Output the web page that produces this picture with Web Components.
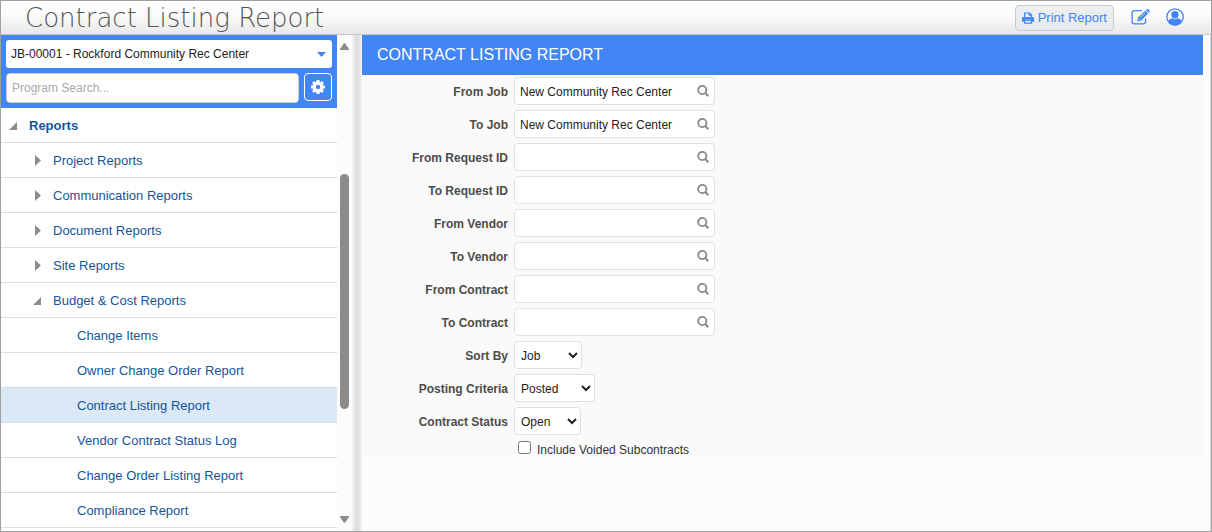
<!DOCTYPE html>
<html lang="en">
<head>
<meta charset="utf-8">
<title>Contract Listing Report</title>
<style>
  html, body { height: 100%; margin: 0; }
  body { font: 12px/16px "Liberation Sans", Arial, sans-serif; color: #333; overflow: hidden; }
</style>
</head>
<body>
<report-app></report-app>

<template id="t-app">
  <style>
    :host { display: flex; flex-direction: column; height: 100vh; box-sizing: border-box;
      border: 1px solid #a0a0a0; background: #fcfcfc;
      --blue: #4285f4; --link: #15559a; --line: #d5dde5; }
    .body { display: flex; flex: 1; min-height: 0; }
    main { flex: 1; min-width: 0; padding-right: 7px; border-right: 1px solid #d5dde5; }
    .splitter { width: 10px; background: linear-gradient(90deg, #f4f4f4, #dedede 40%, #dedede 60%, #f4f4f4); }
  </style>
  <app-header heading="Contract Listing Report"></app-header>
  <div class="body">
    <program-sidebar></program-sidebar>
    <scroll-rail></scroll-rail>
    <div class="splitter"></div>
    <main>
      <report-panel heading="CONTRACT LISTING REPORT">
        <lookup-field label="From Job" value="New Community Rec Center"></lookup-field>
        <lookup-field label="To Job" value="New Community Rec Center"></lookup-field>
        <lookup-field label="From Request ID"></lookup-field>
        <lookup-field label="To Request ID"></lookup-field>
        <lookup-field label="From Vendor"></lookup-field>
        <lookup-field label="To Vendor"></lookup-field>
        <lookup-field label="From Contract"></lookup-field>
        <lookup-field label="To Contract"></lookup-field>
        <select-field label="Sort By" value="Job"></select-field>
        <select-field label="Posting Criteria" value="Posted"></select-field>
        <select-field label="Contract Status" value="Open"></select-field>
        <check-field>Include Voided Subcontracts</check-field>
      </report-panel>
    </main>
  </div>
</template>

<template id="t-header">
  <style>
    :host { display: flex; align-items: center; height: 33px; padding: 0 27px 0 24px;
      border-bottom: 1px solid #c8c8c8; background: linear-gradient(#fff, #fcfcfc 40%, #e8e8e8); }
    h1 { flex: 1; margin: 0; font: 200 26px/32px "DejaVu Sans", sans-serif; color: #555; white-space: nowrap; }
    .print { display: flex; align-items: center; gap: 4px; box-sizing: border-box; height: 26px; padding: 0 6px;
      border: 1px solid #c0ccd6; border-radius: 4px; background: linear-gradient(#eef0f1, #e4e9ec);
      font: 13px/16px "Liberation Sans", Arial, sans-serif; color: var(--blue); }
    .icon { display: flex; padding: 0 0 2px; border: 0; background: none; color: var(--blue); margin-left: 16px; }
    svg { display: block; }
  </style>
  <h1></h1>
  <button class="print" type="button">
    <svg width="12" height="12" viewBox="0 0 12 12" fill="none" stroke="currentColor" stroke-width="1.2"><path d="M2.600 5.500V1h5l1.900 1.900v2.600M7.400 1v2.200h2"/><path d="M2.600 8.200h6.900v2.900H2.600z"/><path d="M1.700 5h8.600q1.700 0 1.700 1.400v3.300H9.600V7.600H2.500v2.100H0V6.400Q0 5 1.700 5z" fill="currentColor" stroke="none"/></svg>
    <span>Print Report</span>
  </button>
  <button class="icon" type="button" aria-label="Edit">
    <svg width="20" height="18" viewBox="0 0 20 18"><path d="M11.500 2.600H4.500Q2.100 2.600 2.100 5v8.500q0 2.400 2.400 2.400h8.700q2.400 0 2.400-2.400v-2.600" fill="none" stroke="currentColor" stroke-width="1.300" stroke-linecap="round"/><path d="M15.300 2.700l2.800 2.800-7 7-4 1 1-4z" fill="currentColor"/><path d="M15.900 2.100l.8-.8q.8-.6 1.500 0l1.200 1.200q.7.700 0 1.500l-.8.800z" fill="currentColor"/><path d="M10.400 9.700l4.800-4.800M9 10.800l1.200 1.200" stroke="#f3f3f3" stroke-width=".8" fill="none"/></svg>
  </button>
  <button class="icon" type="button" aria-label="Account">
    <svg width="18" height="18" viewBox="0 0 18 18"><circle cx="9" cy="9" r="8.200" fill="none" stroke="currentColor" stroke-width="1.300"/><circle cx="9" cy="6.700" r="3.700" fill="currentColor"/><path d="M2 13.200Q3.500 10.500 6 10.200 9 12.400 12 10.200q2.500.3 4 3Q13.200 17.300 9 17.300T2 13.200z" fill="currentColor"/></svg>
  </button>
</template>

<template id="t-sidebar">
  <style>
    :host { display: block; width: 336px; overflow: hidden; background: #fff; }
    .tools { display: grid; grid-template-columns: 1fr 28px; gap: 4px 5px; height: 73px; box-sizing: border-box; padding: 5px; background: var(--blue); }
    .job { grid-column: 1 / -1; display: grid; align-items: center; }
    .job > * { grid-area: 1 / 1; }
    select { appearance: none; height: 28px; width: 100%; padding: 0 5px; border: 0; border-radius: 3px; background: #fff; font: inherit; color: #222; }
    .job svg { justify-self: end; margin-right: 6px; pointer-events: none; }
    input { box-sizing: border-box; width: 100%; height: 30px; padding: 0 5px; border: 1px solid #ccc; border-radius: 4px; background: #fff; font: inherit; }
    input::placeholder { color: #aaa; opacity: 1; }
    button { display: flex; align-items: center; justify-content: center; height: 28px; padding: 0; border: 1px solid #fff; border-radius: 4px; background: var(--blue); color: #fff; }
  </style>
  <div class="tools">
    <div class="job">
      <select aria-label="Job"><option>JB-00001 - Rockford Community Rec Center</option></select>
      <svg width="9" height="5" viewBox="0 0 9 5"><path d="M0 0h9L4.500 5z" fill="#4285f4"/></svg>
    </div>
    <input type="text" placeholder="Program Search..." aria-label="Program Search">
    <button type="button" aria-label="Settings">
      <svg width="14" height="14" viewBox="-7 -7 14 14" fill="#fff"><g id="g"><rect x="-1.600" y="-7" width="3.200" height="14" rx=".6"/><rect x="-7" y="-1.600" width="14" height="3.200" rx=".6"/></g><use href="#g" transform="rotate(45)"/><circle r="5.400"/><circle r="2.200" fill="#4285f4"/></svg>
    </button>
  </div>
  <nav>
    <tree-row level="0" state="open">Reports</tree-row>
    <tree-row level="1" state="closed">Project Reports</tree-row>
    <tree-row level="1" state="closed">Communication Reports</tree-row>
    <tree-row level="1" state="closed">Document Reports</tree-row>
    <tree-row level="1" state="closed">Site Reports</tree-row>
    <tree-row level="1" state="open">Budget &amp; Cost Reports</tree-row>
    <tree-row level="2">Change Items</tree-row>
    <tree-row level="2">Owner Change Order Report</tree-row>
    <tree-row level="2" selected>Contract Listing Report</tree-row>
    <tree-row level="2">Vendor Contract Status Log</tree-row>
    <tree-row level="2">Change Order Listing Report</tree-row>
    <tree-row level="2">Compliance Report</tree-row>
  </nav>
</template>

<template id="t-row">
  <style>
    :host { display: block; border-bottom: 1px solid var(--line); font: 13px/16px "Liberation Sans", Arial, sans-serif; }
    :host([selected]) { background: #dbe8f5; }
    a { display: flex; align-items: center; gap: 12px; box-sizing: border-box; padding: 2px 0 0 8px; height: 34px; color: var(--link); text-decoration: none; white-space: nowrap; }
    :host([level="0"]) a { font-weight: bold; }
    :host([level="1"]) a { padding-left: 32px; }
    :host([level="2"]) a { padding-left: 56px; }
    svg { width: 8px; height: 12px; display: block; fill: #8a8d90; }
    .open, .closed { display: none; }
    :host([state="open"]) .open, :host([state="closed"]) .closed { display: block; }
  </style>
  <a href="#"><svg viewBox="0 0 8 12"><path class="open" d="M8 2v8H0z"/><path class="closed" d="M2 0v11L8 5.500z"/></svg><slot></slot></a>
</template>

<template id="t-rail">
  <style>
    :host { display: flex; flex-direction: column; align-items: center; width: 15px; box-sizing: border-box; padding: 8px 0; background: #fcfcfc; }
    svg { display: block; fill: #8b8b8b; }
    .before { flex: 124; }
    .thumb { flex: 235; width: 9px; border-radius: 5px; background: #8b8b8b; }
    .after { flex: 107; }
  </style>
  <svg width="9" height="7" viewBox="0 0 9 7"><path d="M3.800.5q.7-.8 1.400 0L9 6v1H0V6z"/></svg>
  <div class="before"></div>
  <div class="thumb"></div>
  <div class="after"></div>
  <svg width="9" height="7" viewBox="0 0 9 7"><path d="M3.800 6.500q.7.800 1.400 0L9 1V0H0v1z"/></svg>
</template>

<template id="t-panel">
  <style>
    :host { display: block; background: #fafafa; }
    h2 { margin: 0; padding-left: 15px; background: var(--blue); color: #fff; font: 16px/40px "Liberation Sans", Arial, sans-serif; }
    form { display: flex; flex-direction: column; gap: 5px; padding-top: 2px; }
  </style>
  <h2></h2>
  <form><slot></slot></form>
</template>

<template id="t-lookup">
  <style>
    :host { display: grid; grid-template-columns: 146px 201px; gap: 6px; align-items: center; }
    label { padding-top: 2px; text-align: right; font-weight: bold; color: #4c4c4c; }
    .box { box-sizing: border-box; display: flex; align-items: center; height: 28px; padding: 0 5px; border: 1px solid #dce1e6; border-radius: 4px; background: #fff; }
    input { flex: 1; min-width: 0; padding: 2px 0 0; border: 0; outline: 0; background: none; font: inherit; color: #222; }
    button { display: flex; padding: 0; border: 0; background: none; }
  </style>
  <label for="f"></label>
  <div class="box">
    <input id="f" type="text">
    <button type="button" aria-label="Look up"><svg width="12" height="12" viewBox="0 0 12 12" fill="none" stroke="#85898d"><circle cx="5.300" cy="5" r="4.100" stroke-width="1.800"/><path d="M8.300 8l3 3.200" stroke-width="2"/></svg></button>
  </div>
</template>

<template id="t-select">
  <style>
    :host { display: grid; grid-template-columns: 146px auto; gap: 6px; align-items: center; justify-content: start; }
    label { padding-top: 2px; text-align: right; font-weight: bold; color: #4c4c4c; }
    select { height: 28px; padding: 1px 0 0 2px; border: 1px solid #dce1e6; border-radius: 4px; background: #fff; font: inherit; color: #222; width: 68px; }
    :host([value="Posted"]) select { width: 81px; }
    :host([value="Open"]) select { width: 67px; }
  </style>
  <label for="s"></label>
  <select id="s"></select>
</template>

<template id="t-check">
  <style>
    :host { display: flex; padding-left: 156px; height: 17px; }
    label { display: flex; gap: 6px; line-height: 20px; color: #333; }
    input { width: 13px; height: 13px; margin: 1px 0 0; }
  </style>
  <label><input type="checkbox"><span><slot></slot></span></label>
</template>

<script>
  class Base extends HTMLElement {
    constructor() {
      super();
      this.attachShadow({ mode: 'open' })
        .append(document.getElementById(this.constructor.template).content.cloneNode(true));
    }
    $(sel) { return this.shadowRoot.querySelector(sel); }
  }
  customElements.define('app-header', class extends Base {
    static template = 't-header';
    connectedCallback() { this.$('h1').textContent = this.getAttribute('heading'); }
  });
  customElements.define('tree-row', class extends Base { static template = 't-row'; });
  customElements.define('program-sidebar', class extends Base { static template = 't-sidebar'; });
  customElements.define('scroll-rail', class extends Base { static template = 't-rail'; });
  customElements.define('report-panel', class extends Base {
    static template = 't-panel';
    connectedCallback() { this.$('h2').textContent = this.getAttribute('heading'); }
  });
  customElements.define('lookup-field', class extends Base {
    static template = 't-lookup';
    connectedCallback() {
      this.$('label').textContent = this.getAttribute('label');
      this.$('input').value = this.getAttribute('value') || '';
    }
  });
  customElements.define('select-field', class extends Base {
    static template = 't-select';
    connectedCallback() {
      this.$('label').textContent = this.getAttribute('label');
      this.$('select').replaceChildren(new Option(this.getAttribute('value')));
    }
  });
  customElements.define('check-field', class extends Base { static template = 't-check'; });
  customElements.define('report-app', class extends Base { static template = 't-app'; });
</script>
</body>
</html>
